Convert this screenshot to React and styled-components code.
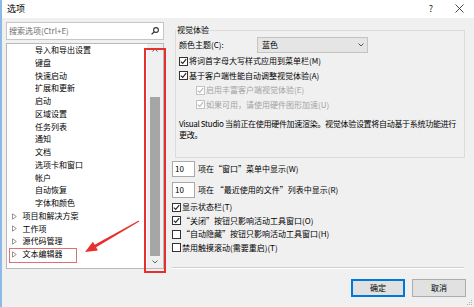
import React from 'react';
import styled, { createGlobalStyle } from 'styled-components';

const FONT = `"Noto Sans CJK SC", "Microsoft YaHei", "Noto Sans", sans-serif`;

const Global = createGlobalStyle`
  html, body { margin: 0; padding: 0; width: 474px; height: 307px; overflow: hidden; background: #f0f0f0; }
  #root { width: 474px; height: 307px; }
  * { box-sizing: border-box; }
`;

const Window = styled.div`
  position: relative;
  width: 474px;
  height: 307px;
  background: #f0f0f0;
  border-left: 2px solid #8cb9e6;
  font-family: ${FONT};
  font-size: 8px;
  color: #000;
  display: flex;
  flex-direction: column;
  overflow: hidden;
`;

const TitleBar = styled.div`
  height: 18px;
  flex: none;
  background: #ffffff;
  display: flex;
  align-items: center;
  padding: 0 0 1px 5px;
`;

const Title = styled.div`
  flex: 1;
  font-size: 9px;
  line-height: 12px;
  color: #000;
`;

const TitleBtn = styled.div`
  width: ${p => p.$w}px;
  height: 17px;
  display: flex;
  align-items: center;
  justify-content: center;
  font-size: 9px;
  color: #222;
`;

const Main = styled.div`
  flex: 1;
  display: grid;
  grid-template-columns: 158px 294px;
  column-gap: 8px;
  padding: 4px 8px 0 4px;
  align-items: start;
`;

const LeftPane = styled.div`
  display: flex;
  flex-direction: column;
  gap: 3px;
`;

const Search = styled.div`
  height: 18px;
  background: #fff;
  border: 1px solid #c6c6c6;
  display: flex;
  align-items: center;
  padding: 0 4px 0 2px;
  color: #6d6d6d;
  line-height: 12px;
`;

const SearchText = styled.span`
  flex: 1;
`;

const Tree = styled.div`
  height: 226px;
  background: #fff;
  border: 1px solid #b9b9b9;
  display: flex;
  overflow: hidden;
`;

const TreeList = styled.div`
  flex: 1;
  min-width: 0;
  overflow: hidden;
`;

const TreeRow = styled.div`
  position: relative;
  height: 12.75px;
  line-height: 12.75px;
  display: flex;
  align-items: center;
  gap: 6px;
  padding-left: ${p => (p.$child ? '28px' : '4.5px')};
  white-space: nowrap;
`;

const RowMark = styled.span`
  position: absolute;
  left: 2px;
  top: 0;
  width: 68px;
  height: 15px;
  border: 1px solid #e07070;
  pointer-events: none;
`;

const ScrollBar = styled.div`
  width: 16px;
  flex: none;
  background: #f0f0f0;
  display: flex;
  flex-direction: column;
  align-items: center;
`;

const ScrollBtn = styled.div`
  height: 12px;
  width: 100%;
  display: flex;
  align-items: center;
  justify-content: center;
`;

const ScrollTrack = styled.div`
  flex: 1;
  width: 100%;
  display: flex;
  flex-direction: column;
  justify-content: flex-end;
  align-items: center;
`;

const Thumb = styled.div`
  width: 10px;
  height: 159px;
  background: #a6a6a6;
`;

const RightPane = styled.div`
  display: flex;
  flex-direction: column;
`;

const Group = styled.fieldset`
  margin: 2px 1px 0 3px;
  padding: 1px 2px 17px 3px;
  border: 1px solid #dcdcdc;
  min-width: 0;
`;

const Legend = styled.legend`
  margin-left: -3px;
  padding: 0 1px;
  line-height: 12px;
  font-size: 8px;
`;

const ComboRow = styled.div`
  display: flex;
  align-items: center;
  height: 16px;
  margin-bottom: 1px;
`;

const Label = styled.span`
  width: ${p => p.$w}px;
  flex: none;
  line-height: 12px;
`;

const Combo = styled.div`
  width: 111px;
  height: 16px;
  background: #e5e5e5;
  border: 1px solid #c4c4c4;
  display: flex;
  align-items: center;
  justify-content: space-between;
  padding: 0 3px 0 4px;
  line-height: 12px;
`;

const CheckRow = styled.div`
  display: flex;
  align-items: center;
  height: ${p => p.$h}px;
  padding-left: ${p => p.$indent || 0}px;
  gap: 1px;
  white-space: nowrap;
  line-height: 12px;
  color: ${p => (p.$disabled ? '#a3a3a3' : '#000')};
`;

const Box = styled.span`
  width: 9px;
  height: 9px;
  flex: none;
  background: #fff;
  border: 1px solid ${p => (p.$disabled ? '#c2c2c2' : '#333')};
  display: flex;
  align-items: center;
  justify-content: center;
`;

const Para = styled.p`
  margin: 7.25px 0 0 0;
  line-height: 10.5px;
  white-space: nowrap;
  letter-spacing: -0.3px;
`;

const NumRow = styled.div`
  display: flex;
  align-items: center;
  height: 16px;
  margin-top: ${p => p.$mt}px;
  margin-bottom: ${p => p.$mb || 0}px;
  white-space: nowrap;
  line-height: 12px;
`;

const NumInput = styled.div`
  width: 23px;
  height: 16px;
  flex: none;
  background: #fff;
  border: 1px solid #a9a9a9;
  padding-left: 2px;
  display: flex;
  align-items: center;
  margin-right: 3px;
`;

const Separator = styled.div`
  height: 2px;
  margin: 12.5px 2px 0 0;
  border-top: 1px solid #d0d0d0;
  border-bottom: 1px solid #ffffff;
`;

const ButtonRow = styled.div`
  display: flex;
  justify-content: flex-end;
  gap: 7px;
  margin-top: 10px;
`;

const Button = styled.div`
  width: 54px;
  height: 18px;
  background: #e1e1e1;
  border: ${p => (p.$primary ? '2px solid #0078d7' : '1px solid #adadad')};
  display: flex;
  align-items: center;
  justify-content: center;
  line-height: 12px;
  font-size: 8px;
`;

const ScrollMark = styled.div`
  position: absolute;
  left: 142px;
  top: 48px;
  width: 22px;
  height: 225px;
  border: 2px solid #e4312f;
  pointer-events: none;
`;

const Overlay = styled.svg`
  position: absolute;
  left: -2px;
  top: 0;
  width: 474px;
  height: 307px;
  pointer-events: none;
`;

const Grip = styled.svg`
  position: absolute;
  right: 1px;
  bottom: 1px;
  width: 8px;
  height: 8px;
`;

const Triangle = () => (
  <svg width="5" height="7" viewBox="0 0 5 7" style={{ flex: 'none' }}>
    <path d="M0.5 0.8 L4.3 3.5 L0.5 6.2 Z" fill="none" stroke="#8a8a8a" strokeWidth="0.9" />
  </svg>
);

const Check = ({ color = '#222' }) => (
  <svg width="7" height="7" viewBox="0 0 7 7">
    <path d="M0.8 3.6 L2.7 5.4 L6.2 1.2" fill="none" stroke={color} strokeWidth="1.1" />
  </svg>
);

const Chevron = ({ up }) => (
  <svg width="6" height="4" viewBox="0 0 6 4">
    <path d={up ? 'M0.5 3.5 L3 1 L5.5 3.5' : 'M0.5 0.5 L3 3 L5.5 0.5'} fill="none" stroke="#606060" strokeWidth="1" />
  </svg>
);

const CheckItem = ({ checked, disabled, indent, h, children }) => (
  <CheckRow $disabled={disabled} $indent={indent} $h={h}>
    <Box $disabled={disabled}>{checked && <Check color={disabled ? '#b8b8b8' : '#222'} />}</Box>
    <span>{children}</span>
  </CheckRow>
);

const children = [
  '导入和导出设置', '键盘', '快速启动', '扩展和更新', '启动', '区域设置', '任务列表',
  '通知', '文档', '选项卡和窗口', '帐户', '自动恢复', '字体和颜色',
];
const tops = ['项目和解决方案', '工作项', '源代码管理', '文本编辑器'];

export default function App() {
  return (
    <>
      <Global />
      <Window>
        <TitleBar>
          <Title>选项</Title>
          <TitleBtn $w={28}>?</TitleBtn>
          <TitleBtn $w={29}>
            <svg width="9" height="9" viewBox="0 0 9 9">
              <path d="M0.5 0.5 L8.5 8.5 M8.5 0.5 L0.5 8.5" stroke="#333" strokeWidth="0.9" />
            </svg>
          </TitleBtn>
        </TitleBar>
        <Main>
          <LeftPane>
            <Search>
              <SearchText>搜索选项(Ctrl+E)</SearchText>
              <svg width="8" height="8" viewBox="0 0 8 8">
                <circle cx="5" cy="3" r="2.4" fill="none" stroke="#333" strokeWidth="1.1" />
                <path d="M3.3 4.7 L0.6 7.4" stroke="#333" strokeWidth="1.3" />
              </svg>
            </Search>
            <Tree>
              <TreeList>
                {children.map(t => (
                  <TreeRow key={t} $child>{t}</TreeRow>
                ))}
                {tops.map(t => (
                  <TreeRow key={t}>
                    <Triangle />
                    <span>{t}</span>
                    {t === '文本编辑器' && <RowMark />}
                  </TreeRow>
                ))}
              </TreeList>
              <ScrollBar>
                <ScrollBtn><Chevron up /></ScrollBtn>
                <ScrollTrack><Thumb /></ScrollTrack>
                <ScrollBtn><Chevron /></ScrollBtn>
              </ScrollBar>
            </Tree>
          </LeftPane>
          <RightPane>
            <Group>
              <Legend>视觉体验</Legend>
              <ComboRow>
                <Label $w={78}>颜色主题(C):</Label>
                <Combo>
                  <span>蓝色</span>
                  <svg width="6" height="4" viewBox="0 0 6 4">
                    <path d="M0.5 0.5 L3 3 L5.5 0.5" fill="none" stroke="#555" strokeWidth="1" />
                  </svg>
                </Combo>
              </ComboRow>
              <CheckItem checked h={14.5}>将词首字母大写样式应用到菜单栏(M)</CheckItem>
              <CheckItem checked h={14.5}>基于客户端性能自动调整视觉体验(A)</CheckItem>
              <CheckItem checked disabled indent={17} h={14.5}>启用丰富客户端视觉体验(E)</CheckItem>
              <CheckItem checked disabled indent={17} h={14.5}>如果可用，请使用硬件图形加速(U)</CheckItem>
              <Para>
                Visual Studio 当前正在使用硬件加速渲染。视觉体验设置将自动基于系统功能进行
                <br />
                更改。
              </Para>
            </Group>
            <NumRow $mt={3}>
              <NumInput>10</NumInput>
              <span>项在“窗口”菜单中显示(W)</span>
            </NumRow>
            <NumRow $mt={5} $mb={2}>
              <NumInput>10</NumInput>
              <span>项在 “最近使用的文件”列表中显示(R)</span>
            </NumRow>
            <CheckItem checked h={13.5}>显示状态栏(T)</CheckItem>
            <CheckItem checked h={13.5}>“关闭”按钮只影响活动工具窗口(O)</CheckItem>
            <CheckItem h={13.5}>“自动隐藏”按钮只影响活动工具窗口(H)</CheckItem>
            <CheckItem h={13.5}>禁用触摸滚动(需要重启)(T)</CheckItem>
            <Separator />
            <ButtonRow>
              <Button $primary>确定</Button>
              <Button>取消</Button>
            </ButtonRow>
          </RightPane>
        </Main>
        <ScrollMark />
        <Overlay viewBox="0 0 474 307">
          <polygon
            points="138.75,220.57 94.65,244.7 92.9,241.7 85,252 97.9,250.4 96.15,247.3 139.25,221.43"
            fill="#e8302c"
          />
        </Overlay>
        <Grip viewBox="0 0 8 8">
          <g fill="#b0b0b0">
            <rect x="6" y="2" width="1" height="1" />
            <rect x="4" y="4" width="1" height="1" />
            <rect x="6" y="4" width="1" height="1" />
            <rect x="2" y="6" width="1" height="1" />
            <rect x="4" y="6" width="1" height="1" />
            <rect x="6" y="6" width="1" height="1" />
          </g>
        </Grip>
      </Window>
    </>
  );
}
